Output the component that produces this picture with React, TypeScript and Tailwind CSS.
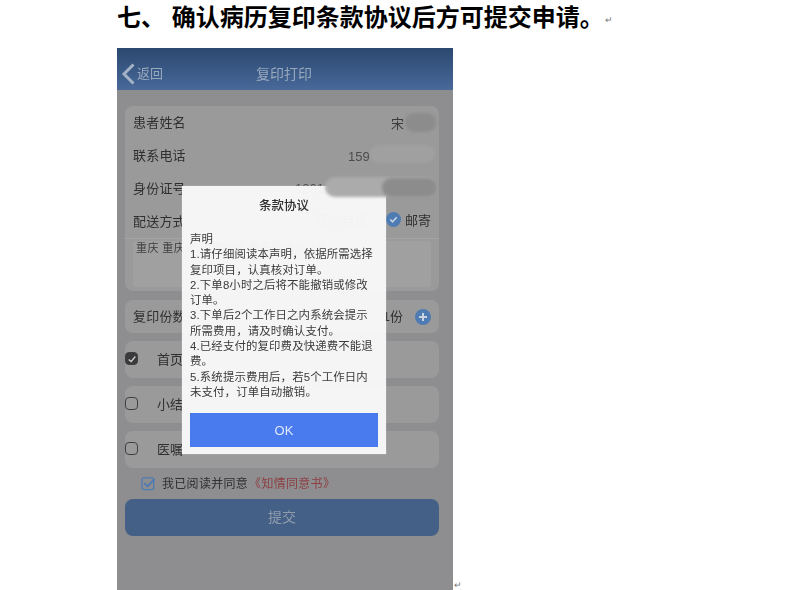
const cjk = "font-['Liberation_Sans','Noto_Sans_CJK_SC',sans-serif]";

const terms = [
  '声明',
  '1.请仔细阅读本声明，依据所需选择',
  '复印项目，认真核对订单。',
  '2.下单8小时之后将不能撤销或修改',
  '订单。',
  '3.下单后2个工作日之内系统会提示',
  '所需费用，请及时确认支付。',
  '4.已经支付的复印费及快递费不能退',
  '费。',
  '5.系统提示费用后，若5个工作日内',
  '未支付，订单自动撤销。',
];

function InfoRow({ label }: { label: string }) {
  return (
    <div className="flex h-[33px] items-center pl-2 text-[13px] tracking-[0.2px] text-[#2f2f30]">
      <span>{label}</span>
    </div>
  );
}

function OptionRow({ label, checked }: { label: string; checked?: boolean }) {
  return (
    <div className="relative ml-2 mr-[14px] flex h-[37px] items-center rounded-lg bg-[#9a9a9b] pl-[32px] text-[13px] text-[#2f2f30]">
      <span
        className={`absolute left-0 top-[11px] flex h-[13px] w-[13px] items-center justify-center rounded-[4px] border border-[#3f3f40] ${
          checked ? 'bg-[#3a3a3c]' : ''
        }`}
      >
        {checked && (
          <svg viewBox="0 0 12 12" className="h-[10px] w-[10px]">
            <path d="M2 6.5 5 9l5-6" fill="none" stroke="#cfcfd0" strokeWidth="1.5" />
          </svg>
        )}
      </span>
      {label}
    </div>
  );
}

function Smudge({ className }: { className: string }) {
  return <div className={`absolute z-10 rounded-full blur-[1.5px] ${className}`} />;
}

export default function App() {
  return (
    <div className={`h-[590px] w-[787px] overflow-hidden bg-white ${cjk}`}>
      {/* 标题 */}
      <div className="flex h-[48px] items-start pl-[117px]">
        <h1 className="mt-[3px] text-[24px] font-bold leading-[30px] whitespace-pre text-black">
          七、 确认病历复印条款协议后方可提交申请。
        </h1>
        <span className="ml-[1px] mt-[14px] text-[9px] text-[#777]">↵</span>
      </div>

      <div className="flex items-end">
        <div className="relative ml-[117px] h-[542px] w-[336px] bg-[#8e8e90] blur-[0.35px]">
          {/* 顶栏 */}
          <div className="relative flex h-[42px] items-center justify-center bg-gradient-to-b from-[#2b486f] to-[#48699a] pr-[2px] pt-[10px] text-[14px] text-[#98a8bd]">
            <div className="absolute left-[4px] top-[15px] flex items-center text-[13px]">
              <svg viewBox="0 0 14 22" className="h-[22px] w-[14px]">
                <path d="M12.5 1.5 3 11l9.5 9.5" fill="none" stroke="#a4b2c6" strokeWidth="3" />
              </svg>
              <span className="ml-[2px]">返回</span>
            </div>
            复印打印
          </div>

          <div className="pt-4">
            {/* 患者信息 */}
            <div className="relative ml-2 mr-[14px] h-[185px] rounded-lg bg-[#9a9a9b]">
              <InfoRow label="患者姓名" />
              <InfoRow label="联系电话" />
              <InfoRow label="身份证号" />
              <InfoRow label="配送方式" />
              <div className="border-t border-[#a5a5a6] px-2 pt-[2px]">
                <div className="h-[46px] rounded-sm bg-[#a0a0a1] px-[3px] text-[11px] leading-[15px] tracking-[0.4px] text-[#3c3c3d]">
                  重庆 重庆市 沙坪坝区 歌乐山街道 1号
                </div>
              </div>
              <span className="absolute left-[266px] top-[8px] text-[13px] text-[#3c3c3d]">宋</span>
              <span className="absolute left-[223px] top-[41px] text-[13px] text-[#4c4c4d]">159</span>
              <span className="absolute left-[170px] top-[73px] text-[13px] text-[#4c4c4d]">1201</span>
              <Smudge className="left-[280px] top-[7px] h-[19px] w-[31px] bg-[#8c8c8d]" />
              <Smudge className="left-[245px] top-[39px] h-[18px] w-[65px] bg-[#a0a0a1]" />
              <Smudge className="left-[200px] top-[71px] h-[20px] w-[112px] bg-[#ababac]" />
              <Smudge className="left-[257px] top-[72px] h-[19px] w-[55px] bg-[#8c8c8d]" />
              <span className="absolute left-[174px] top-[106px] h-[15px] w-[15px] rounded-full border border-[#a3a3a4]" />
              <span className="absolute left-[190px] top-[105px] text-[13px] tracking-[0.2px] text-[#555]">预约自提</span>
              <span className="absolute left-[261px] top-[106px] flex h-[15px] w-[15px] items-center justify-center rounded-full bg-[#4f7bb3]">
                <svg viewBox="0 0 12 12" className="h-[11px] w-[11px]">
                  <path d="M2.5 6 5 8.5l4.5-5" fill="none" stroke="#c8d4e2" strokeWidth="1.8" />
                </svg>
              </span>
              <span className="absolute left-[280px] top-[105px] text-[13px] text-[#2f2f30]">邮寄</span>
            </div>

            {/* 复印份数 */}
            <div className="ml-2 mr-[14px] mt-[9px] flex h-[33px] items-center justify-between rounded-lg bg-[#9a9a9b] px-2 text-[13px] text-[#2f2f30]">
              <span className="tracking-[0.2px]">复印份数</span>
              <div className="flex items-center gap-3">
                <span>1份</span>
                <span className="flex h-[16px] w-[16px] items-center justify-center rounded-full bg-[#4f7bb3]">
                  <svg viewBox="0 0 12 12" className="h-[12px] w-[12px]">
                    <path d="M6 2v8M2 6h8" stroke="#c8d4e2" strokeWidth="2" />
                  </svg>
                </span>
              </div>
            </div>

            {/* 复印内容 */}
            <div className="mt-2 flex flex-col gap-2">
              <OptionRow label="首页" checked />
              <OptionRow label="小结" />
              <OptionRow label="医嘱" />
            </div>

            {/* 同意条款 */}
            <div className="mt-[6px] flex h-[19px] items-center pl-[24px] text-[12px] text-[#2f2f30]">
              <svg viewBox="0 0 16 16" className="mr-[6px] h-[15px] w-[15px]">
                <rect x="1" y="2" width="12.5" height="12.5" rx="2" fill="none" stroke="#4f7bb3" strokeWidth="1.4" />
                <path d="M3.5 7.5 7 11l7.5-8" fill="none" stroke="#4f7bb3" strokeWidth="2" />
              </svg>
              <span className="tracking-[0.3px]">我已阅读并同意</span>
              <span className="ml-[1px] tracking-[0.3px] text-[#8c3f42]">《知情同意书》</span>
            </div>

            {/* 提交 */}
            <div className="ml-2 mr-[14px] mt-[6px] flex h-[37px] items-center justify-center rounded-lg bg-[#456086] text-[14px] text-[#8f9cae]">
              提交
            </div>
          </div>

          {/* 条款弹窗 */}
          <div className="absolute left-[65px] top-[138px] flex h-[268px] w-[204px] flex-col bg-[#f8f8f8]/[0.97] px-2 shadow-[0_0_1px_rgba(255,255,255,0.6)]">
            <div className="pt-[11px] text-center text-[12.5px] leading-[18px] font-medium text-[#2e2e2e]">条款协议</div>
            <div className="mt-[17px] text-[11.4px] leading-[15.3px] tracking-[0.15px] whitespace-nowrap text-[#3a3a3a]">
              {terms.map((line) => (
                <div key={line}>{line}</div>
              ))}
            </div>
            <button className="mt-[13px] flex h-[34px] w-full items-center justify-center bg-[#4a7bee] text-[13px] text-[#dfe8fb]">
              OK
            </button>
          </div>
        </div>
        <span className="ml-[1px] text-[9px] leading-[10px] text-[#777]">↵</span>
      </div>
    </div>
  );
}
